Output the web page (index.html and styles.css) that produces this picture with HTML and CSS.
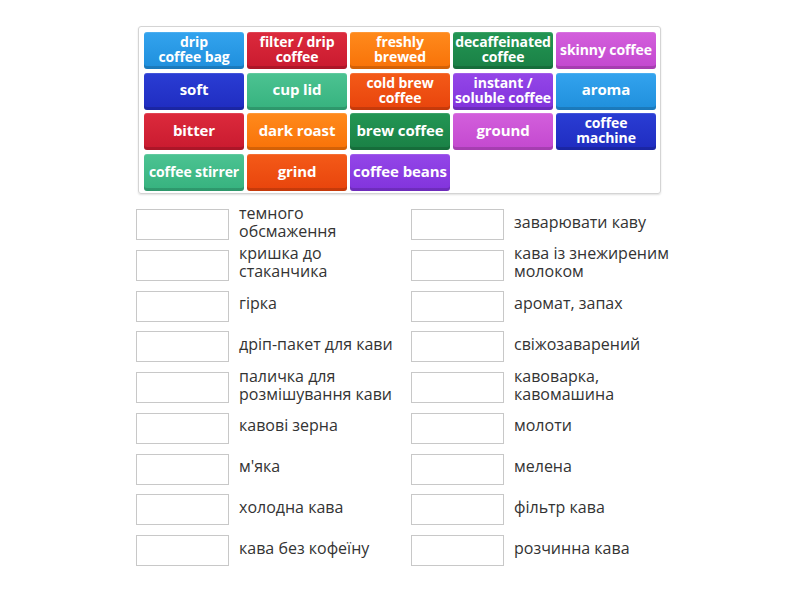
FILE: index.html
```html
<!DOCTYPE html>
<html lang="uk">
<head>
<meta charset="utf-8">
<link rel="stylesheet" href="styles.css">
</head>
<body>
<div class="page">
  <div class="bank">
    <div class="tile c-blue">drip<br>coffee bag</div>
    <div class="tile c-red">filter / drip<br>coffee</div>
    <div class="tile c-orange">freshly<br>brewed</div>
    <div class="tile c-green">decaffeinated<br>coffee</div>
    <div class="tile c-pink">skinny coffee</div>

    <div class="tile big c-navy">soft</div>
    <div class="tile big c-teal">cup lid</div>
    <div class="tile c-ored">cold brew<br>coffee</div>
    <div class="tile c-purple">instant /<br>soluble coffee</div>
    <div class="tile big c-blue">aroma</div>

    <div class="tile big c-red">bitter</div>
    <div class="tile big c-orange">dark roast</div>
    <div class="tile big c-green">brew coffee</div>
    <div class="tile big c-pink">ground</div>
    <div class="tile c-navy">coffee<br>machine</div>

    <div class="tile c-teal">coffee stirrer</div>
    <div class="tile big c-ored">grind</div>
    <div class="tile big c-purple">coffee beans</div>
  </div>

  <div class="answers">
    <div class="row"><div class="box"></div><div class="label">темного обсмаження</div></div>
    <div class="row"><div class="box"></div><div class="label">заварювати каву</div></div>
    <div class="row"><div class="box"></div><div class="label">кришка до стаканчика</div></div>
    <div class="row"><div class="box"></div><div class="label">кава із знежиреним молоком</div></div>
    <div class="row"><div class="box"></div><div class="label">гірка</div></div>
    <div class="row"><div class="box"></div><div class="label">аромат, запах</div></div>
    <div class="row"><div class="box"></div><div class="label">дріп-пакет для кави</div></div>
    <div class="row"><div class="box"></div><div class="label">свіжозаварений</div></div>
    <div class="row"><div class="box"></div><div class="label">паличка для розмішування кави</div></div>
    <div class="row"><div class="box"></div><div class="label">кавоварка, кавомашина</div></div>
    <div class="row"><div class="box"></div><div class="label">кавові зерна</div></div>
    <div class="row"><div class="box"></div><div class="label">молоти</div></div>
    <div class="row"><div class="box"></div><div class="label">м'яка</div></div>
    <div class="row"><div class="box"></div><div class="label">мелена</div></div>
    <div class="row"><div class="box"></div><div class="label">холодна кава</div></div>
    <div class="row"><div class="box"></div><div class="label">фільтр кава</div></div>
    <div class="row"><div class="box"></div><div class="label">кава без кофеїну</div></div>
    <div class="row"><div class="box"></div><div class="label">розчинна кава</div></div>
  </div>
</div>
</body>
</html>
```

FILE: styles.css
```css
* { box-sizing: border-box; }
html, body { margin: 0; padding: 0; background: #fff; }
body {
  font-family: "Open Sans", "Noto Sans", sans-serif;
  color: #333;
}
.page {
  width: 800px;
  height: 600px;
  padding-top: 26px;
}
.bank {
  width: 523px;
  height: 168px;
  margin-left: 138px;
  border: 1px solid #d4d4d4;
  border-radius: 3px;
  box-shadow: 0 1px 2px rgba(0,0,0,0.12);
  padding: 5px 4px 3px 5px;
  display: grid;
  grid-template-columns: repeat(5, 100px);
  grid-auto-rows: 37px;
  column-gap: 3px;
  row-gap: 3.7px;
  align-content: start;
}
.tile {
  border-radius: 3px;
  color: #fff;
  font-weight: 700;
  font-size: 14px;
  line-height: 15px;
  text-align: center;
  display: flex;
  align-items: center;
  justify-content: center;
  white-space: nowrap;
  letter-spacing: -0.1px;
  box-shadow: inset 0 -3px 0 rgba(0,0,0,0.15), inset 0 1px 0 rgba(255,255,255,0.12);
  padding-bottom: 3px;
}
.tile.big { font-size: 15px; }
.c-blue   { background: linear-gradient(#33a3ee, #1f8fdc); }
.c-red    { background: linear-gradient(#dc2a3c, #c91a2f); }
.c-orange { background: linear-gradient(#ff8a1c, #f87208); }
.c-green  { background: linear-gradient(#239654, #1a8045); }
.c-pink   { background: linear-gradient(#d35fdc, #c348cf); }
.c-navy   { background: linear-gradient(#2a3dd4, #1f2cc0); }
.c-teal   { background: linear-gradient(#4cc392, #36b27e); }
.c-ored   { background: linear-gradient(#f45a18, #e8440c); }
.c-purple { background: linear-gradient(#9446e8, #8133dc); }

.answers {
  margin-top: 15px;
  margin-left: 136px;
  display: grid;
  grid-template-columns: 275px 275px;
  grid-auto-rows: 31px;
  row-gap: 9.75px;
}
.row {
  display: flex;
  align-items: center;
  gap: 10px;
}
.box {
  flex: none;
  width: 93px;
  height: 31px;
  border: 1px solid #c8c8c8;
  background: #fff;
}
.label {
  width: 164px;
  font-size: 16px;
  line-height: 18px;
  color: #333;
  padding-bottom: 6px;
}
```
